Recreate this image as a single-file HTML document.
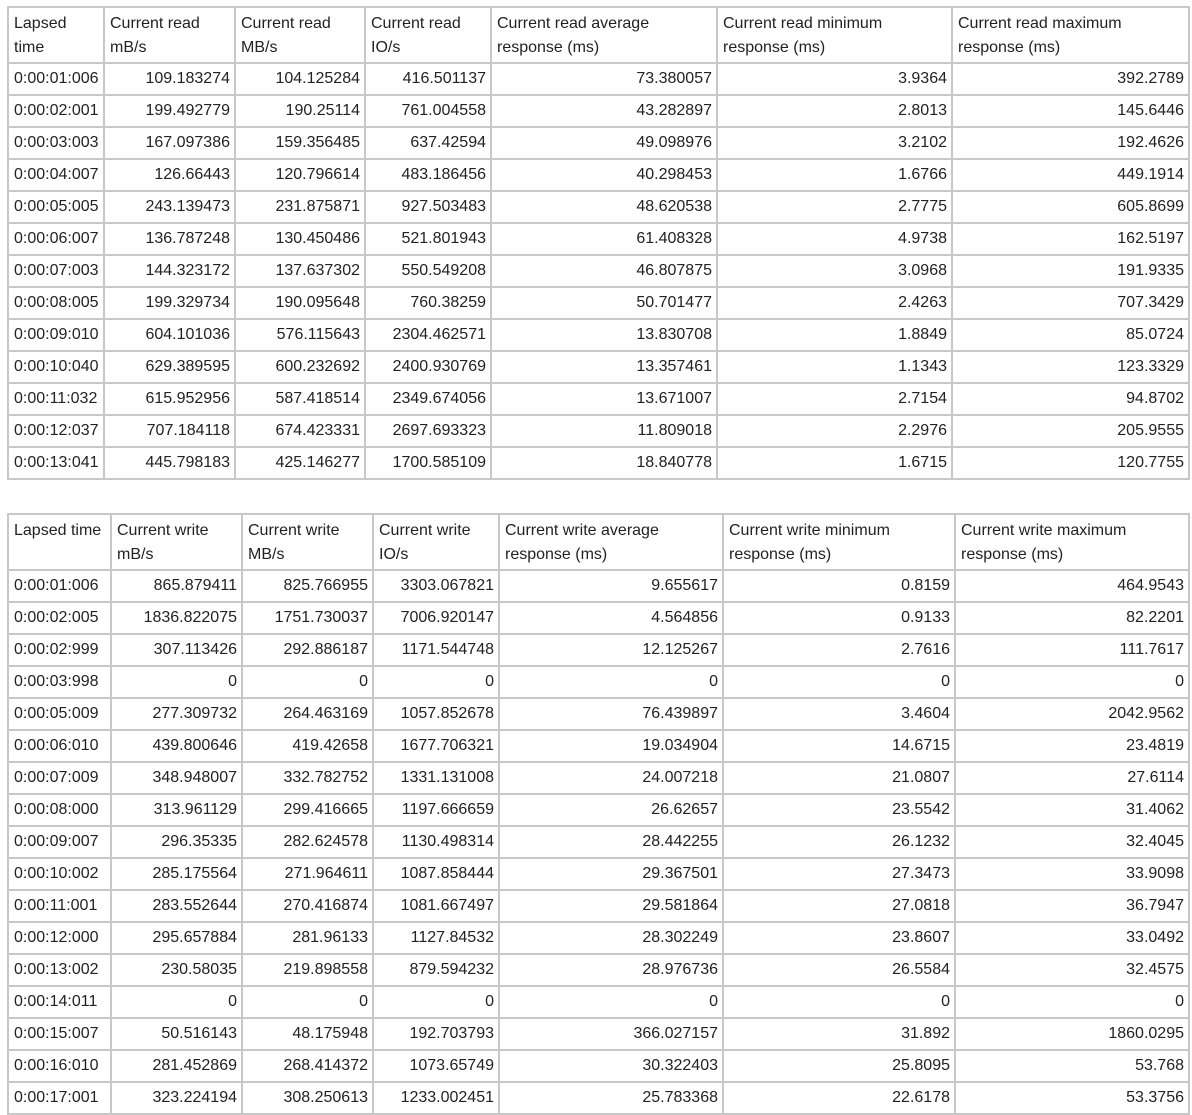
<!DOCTYPE html>
<html><head><meta charset="utf-8"><style>
html,body{margin:0;padding:0;background:#fff;width:1192px;height:1110px;overflow:hidden}
body{font-family:"Liberation Sans",sans-serif;font-size:16px;color:#222}
table{border-collapse:collapse;table-layout:fixed;position:absolute;left:7px}
td,th{border:2px solid #c8c8c8;padding:0 4px 0 5px;height:30px;line-height:24px;white-space:nowrap;overflow:hidden}
th{font-weight:normal;text-align:left;vertical-align:top;white-space:normal;padding-top:4px;height:50px}
td{text-align:right}
td:first-child{text-align:left}
#t1{top:6px}
#t2{top:513px}
</style></head><body>
<table id="t1">
<colgroup><col style="width:96px"><col style="width:131px"><col style="width:130px"><col style="width:126px"><col style="width:226px"><col style="width:235px"><col style="width:237px"></colgroup>
<tr><th>Lapsed time</th><th>Current read mB/s</th><th>Current read MB/s</th><th>Current read IO/s</th><th>Current read average response (ms)</th><th>Current read minimum response (ms)</th><th>Current read maximum response (ms)</th></tr>
<tr><td>0:00:01:006</td><td>109.183274</td><td>104.125284</td><td>416.501137</td><td>73.380057</td><td>3.9364</td><td>392.2789</td></tr>
<tr><td>0:00:02:001</td><td>199.492779</td><td>190.25114</td><td>761.004558</td><td>43.282897</td><td>2.8013</td><td>145.6446</td></tr>
<tr><td>0:00:03:003</td><td>167.097386</td><td>159.356485</td><td>637.42594</td><td>49.098976</td><td>3.2102</td><td>192.4626</td></tr>
<tr><td>0:00:04:007</td><td>126.66443</td><td>120.796614</td><td>483.186456</td><td>40.298453</td><td>1.6766</td><td>449.1914</td></tr>
<tr><td>0:00:05:005</td><td>243.139473</td><td>231.875871</td><td>927.503483</td><td>48.620538</td><td>2.7775</td><td>605.8699</td></tr>
<tr><td>0:00:06:007</td><td>136.787248</td><td>130.450486</td><td>521.801943</td><td>61.408328</td><td>4.9738</td><td>162.5197</td></tr>
<tr><td>0:00:07:003</td><td>144.323172</td><td>137.637302</td><td>550.549208</td><td>46.807875</td><td>3.0968</td><td>191.9335</td></tr>
<tr><td>0:00:08:005</td><td>199.329734</td><td>190.095648</td><td>760.38259</td><td>50.701477</td><td>2.4263</td><td>707.3429</td></tr>
<tr><td>0:00:09:010</td><td>604.101036</td><td>576.115643</td><td>2304.462571</td><td>13.830708</td><td>1.8849</td><td>85.0724</td></tr>
<tr><td>0:00:10:040</td><td>629.389595</td><td>600.232692</td><td>2400.930769</td><td>13.357461</td><td>1.1343</td><td>123.3329</td></tr>
<tr><td>0:00:11:032</td><td>615.952956</td><td>587.418514</td><td>2349.674056</td><td>13.671007</td><td>2.7154</td><td>94.8702</td></tr>
<tr><td>0:00:12:037</td><td>707.184118</td><td>674.423331</td><td>2697.693323</td><td>11.809018</td><td>2.2976</td><td>205.9555</td></tr>
<tr><td>0:00:13:041</td><td>445.798183</td><td>425.146277</td><td>1700.585109</td><td>18.840778</td><td>1.6715</td><td>120.7755</td></tr>
</table>
<table id="t2">
<colgroup><col style="width:103px"><col style="width:131px"><col style="width:131px"><col style="width:126px"><col style="width:224px"><col style="width:232px"><col style="width:234px"></colgroup>
<tr><th>Lapsed time</th><th>Current write mB/s</th><th>Current write MB/s</th><th>Current write IO/s</th><th>Current write average response (ms)</th><th>Current write minimum response (ms)</th><th>Current write maximum response (ms)</th></tr>
<tr><td>0:00:01:006</td><td>865.879411</td><td>825.766955</td><td>3303.067821</td><td>9.655617</td><td>0.8159</td><td>464.9543</td></tr>
<tr><td>0:00:02:005</td><td>1836.822075</td><td>1751.730037</td><td>7006.920147</td><td>4.564856</td><td>0.9133</td><td>82.2201</td></tr>
<tr><td>0:00:02:999</td><td>307.113426</td><td>292.886187</td><td>1171.544748</td><td>12.125267</td><td>2.7616</td><td>111.7617</td></tr>
<tr><td>0:00:03:998</td><td>0</td><td>0</td><td>0</td><td>0</td><td>0</td><td>0</td></tr>
<tr><td>0:00:05:009</td><td>277.309732</td><td>264.463169</td><td>1057.852678</td><td>76.439897</td><td>3.4604</td><td>2042.9562</td></tr>
<tr><td>0:00:06:010</td><td>439.800646</td><td>419.42658</td><td>1677.706321</td><td>19.034904</td><td>14.6715</td><td>23.4819</td></tr>
<tr><td>0:00:07:009</td><td>348.948007</td><td>332.782752</td><td>1331.131008</td><td>24.007218</td><td>21.0807</td><td>27.6114</td></tr>
<tr><td>0:00:08:000</td><td>313.961129</td><td>299.416665</td><td>1197.666659</td><td>26.62657</td><td>23.5542</td><td>31.4062</td></tr>
<tr><td>0:00:09:007</td><td>296.35335</td><td>282.624578</td><td>1130.498314</td><td>28.442255</td><td>26.1232</td><td>32.4045</td></tr>
<tr><td>0:00:10:002</td><td>285.175564</td><td>271.964611</td><td>1087.858444</td><td>29.367501</td><td>27.3473</td><td>33.9098</td></tr>
<tr><td>0:00:11:001</td><td>283.552644</td><td>270.416874</td><td>1081.667497</td><td>29.581864</td><td>27.0818</td><td>36.7947</td></tr>
<tr><td>0:00:12:000</td><td>295.657884</td><td>281.96133</td><td>1127.84532</td><td>28.302249</td><td>23.8607</td><td>33.0492</td></tr>
<tr><td>0:00:13:002</td><td>230.58035</td><td>219.898558</td><td>879.594232</td><td>28.976736</td><td>26.5584</td><td>32.4575</td></tr>
<tr><td>0:00:14:011</td><td>0</td><td>0</td><td>0</td><td>0</td><td>0</td><td>0</td></tr>
<tr><td>0:00:15:007</td><td>50.516143</td><td>48.175948</td><td>192.703793</td><td>366.027157</td><td>31.892</td><td>1860.0295</td></tr>
<tr><td>0:00:16:010</td><td>281.452869</td><td>268.414372</td><td>1073.65749</td><td>30.322403</td><td>25.8095</td><td>53.768</td></tr>
<tr><td>0:00:17:001</td><td>323.224194</td><td>308.250613</td><td>1233.002451</td><td>25.783368</td><td>22.6178</td><td>53.3756</td></tr>
</table>
</body></html>
